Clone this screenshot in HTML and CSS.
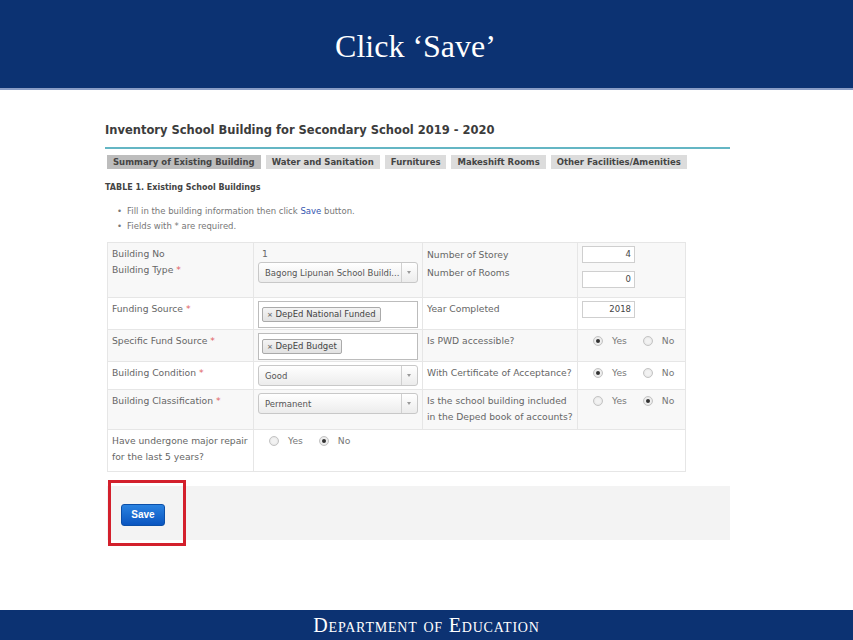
FILE: index.html
```html
<!DOCTYPE html>
<html lang="en">
<head>
    <meta charset="UTF-8">
    <meta name="viewport" content="width=device-width, initial-scale=1.0">
    <title>Click Save</title>
    <link rel="stylesheet" href="styles.css">
</head>
<body>
    <header class="slide-head">
        <h1>Click ‘Save’</h1>
    </header>

    <main class="page">
        <h2 class="page-title">Inventory School Building for Secondary School 2019 - 2020</h2>

        <ul class="tabs">
            <li class="active">Summary of Existing Building</li>
            <li>Water and Sanitation</li>
            <li>Furnitures</li>
            <li>Makeshift Rooms</li>
            <li>Other Facilities/Amenities</li>
        </ul>

        <h4 class="table-caption">TABLE 1. Existing School Buildings</h4>
        <ul class="notes">
            <li>Fill in the building information then click <span class="link">Save</span> button.</li>
            <li>Fields with * are required.</li>
        </ul>

        <table class="form-table">
            <tr class="row-a">
                <td class="label">
                    <div>Building No</div>
                    <div>Building Type <span class="req">*</span></div>
                </td>
                <td>
                    <div class="value">1</div>
                    <div class="select"><span>Bagong Lipunan School Buildi...</span><i class="arrow"></i></div>
                </td>
                <td class="label label-wide">
                    <div>Number of Storey</div>
                    <div>Number of Rooms</div>
                </td>
                <td>
                    <div class="num">4</div>
                    <div class="num">0</div>
                </td>
            </tr>
            <tr class="row-b">
                <td class="label">Funding Source <span class="req">*</span></td>
                <td>
                    <div class="multi"><span class="tag"><b>×</b> DepEd National Funded</span></div>
                </td>
                <td class="label">Year Completed</td>
                <td><div class="num">2018</div></td>
            </tr>
            <tr class="row-b">
                <td class="label">Specific Fund Source <span class="req">*</span></td>
                <td>
                    <div class="multi"><span class="tag"><b>×</b> DepEd Budget</span></div>
                </td>
                <td class="label">Is PWD accessible?</td>
                <td>
                    <div class="radios">
                        <span class="radio checked"></span><span class="opt">Yes</span>
                        <span class="radio"></span><span class="opt">No</span>
                    </div>
                </td>
            </tr>
            <tr class="row-c">
                <td class="label">Building Condition <span class="req">*</span></td>
                <td>
                    <div class="select"><span>Good</span><i class="arrow"></i></div>
                </td>
                <td class="label">With Certificate of Acceptance?</td>
                <td>
                    <div class="radios">
                        <span class="radio checked"></span><span class="opt">Yes</span>
                        <span class="radio"></span><span class="opt">No</span>
                    </div>
                </td>
            </tr>
            <tr class="row-d">
                <td class="label">Building Classification <span class="req">*</span></td>
                <td>
                    <div class="select"><span>Permanent</span><i class="arrow"></i></div>
                </td>
                <td class="label">
                    <div>Is the school building included</div>
                    <div>in the Deped book of accounts?</div>
                </td>
                <td>
                    <div class="radios">
                        <span class="radio"></span><span class="opt">Yes</span>
                        <span class="radio checked"></span><span class="opt">No</span>
                    </div>
                </td>
            </tr>
            <tr class="row-e">
                <td class="label">
                    <div>Have undergone major repair</div>
                    <div>for the last 5 years?</div>
                </td>
                <td colspan="3">
                    <div class="radios">
                        <span class="radio"></span><span class="opt">Yes</span>
                        <span class="radio checked"></span><span class="opt">No</span>
                    </div>
                </td>
            </tr>
        </table>

        <div class="actions">
            <div class="highlight">
                <button class="btn-save">Save</button>
            </div>
        </div>
    </main>

    <footer class="slide-foot">Department of Education</footer>
</body>
</html>
```

FILE: styles.css
```css
body {
    margin: 0;
    min-height: 640px;
    display: flex;
    flex-direction: column;
    font-family: "DejaVu Sans", Verdana, sans-serif;
    background: #fff;
}
.slide-head {
    background-color: #0c3272;
    height: 88px;
    border-bottom: 2px solid #8a9dc6;
    display: flex;
    align-items: center;
    justify-content: center;
}
.slide-head h1 {
    margin: 4px 22px 0 0;
    font-family: "Liberation Serif", "Times New Roman", serif;
    font-weight: normal;
    font-size: 32px;
    color: #fff;
}
.page {
    width: 625px;
    margin-left: 105px;
    padding-top: 32px;
}
.page-title {
    margin: 0;
    font-size: 11.5px;
    line-height: 16px;
    color: #3c3c3c;
    padding-bottom: 9px;
    border-bottom: 2px solid #64b6c4;
}
.tabs {
    list-style: none;
    margin: 6px 0 0 2px;
    padding: 0;
    display: flex;
    gap: 5px;
}
.tabs li {
    background-color: #dcdcdc;
    color: #444;
    font-size: 8.5px;
    font-weight: bold;
    line-height: 14px;
    padding: 0 6px;
}
.tabs li.active {
    background-color: #bdbdbd;
}
.table-caption {
    margin: 13px 0 0;
    font-size: 8px;
    line-height: 12px;
    color: #444;
}
.notes {
    margin: 10px 0 0;
    padding-left: 12px;
    list-style: none;
    font-size: 8.5px;
    line-height: 15px;
    color: #777;
}
.notes li::before {
    content: "•";
    margin-right: 5px;
}
.notes .link {
    color: #3456b0;
}
.form-table {
    margin: 8px 0 0 2px;
    border-collapse: collapse;
    width: 579px;
    table-layout: fixed;
    font-size: 9.2px;
    color: #666;
}
.form-table td {
    box-sizing: border-box;
    border: 1px solid #e6e6e6;
    vertical-align: top;
    padding: 3px 4px 0;
    line-height: 16px;
}
.form-table td:nth-child(1) { width: 146px; }
.form-table td:nth-child(2) { width: 169px; }
.form-table td:nth-child(3) { width: 155px; }
.form-table tr:nth-child(odd) td {
    background-color: #f8f8f8;
}
.row-a { height: 55px; }
.row-b { height: 32px; }
.row-c { height: 28px; }
.row-d { height: 40px; }
.row-e { height: 42px; }
.label-wide {
    line-height: 18px !important;
}
.req {
    color: #e06060;
}
.value {
    padding-left: 4px;
}
.select {
    display: flex;
    align-items: center;
    box-sizing: border-box;
    height: 21px;
    border: 1px solid #c8c8c8;
    border-radius: 3px;
    background: linear-gradient(#ffffff, #ececec);
    color: #555;
    font-size: 8.5px;
}
.select span {
    flex: 1;
    padding-left: 6px;
    white-space: nowrap;
}
.select .arrow {
    width: 15px;
    height: 100%;
    border-left: 1px solid #d0d0d0;
    position: relative;
}
.select .arrow::after {
    content: "";
    position: absolute;
    left: 5px;
    top: 8px;
    border-left: 2px solid transparent;
    border-right: 2px solid transparent;
    border-top: 3px solid #999;
}
.multi {
    box-sizing: border-box;
    height: 27px;
    border: 1px solid #bcbcbc;
    background-color: #fff;
    padding: 4px 3px 0;
}
.tag {
    display: inline-block;
    border: 1px solid #aaa;
    border-radius: 2px;
    background: linear-gradient(#f4f4f4, #e2e2e2);
    color: #444;
    font-size: 8.5px;
    line-height: 12px;
    padding: 0 4px;
}
.tag b {
    font-size: 7px;
    color: #777;
}
.num {
    box-sizing: border-box;
    width: 53px;
    height: 17px;
    border: 1px solid #cfcfcf;
    background-color: #fff;
    text-align: right;
    padding-right: 3px;
    margin-bottom: 8px;
    line-height: 15px;
    font-size: 8.5px;
    color: #444;
}
.radios {
    display: flex;
    align-items: center;
    height: 16px;
    padding-left: 11px;
    color: #777;
}
.radio {
    flex-shrink: 0;
    box-sizing: border-box;
    width: 10px;
    height: 10px;
    border: 1px solid #c4c4c4;
    border-radius: 50%;
    background: radial-gradient(circle, #f2f2f2 40%, #dcdcdc);
    display: flex;
    align-items: center;
    justify-content: center;
}
.radio.checked::after {
    content: "";
    width: 4px;
    height: 4px;
    border-radius: 50%;
    background-color: #333;
}
.opt {
    margin-left: 9px;
}
.opt + .radio {
    margin-left: 16px;
}
.actions {
    margin: 14px 0 0 2px;
    background-color: #f3f3f3;
    height: 54px;
    display: flex;
}
.highlight {
    width: 78px;
    height: 66px;
    margin: -6px 0 0 1px;
    border: 3px solid #d3202c;
    padding: 20px 0 0 10px;
    box-sizing: border-box;
}
.btn-save {
    width: 44px;
    height: 22px;
    border: 1px solid #0b4fa8;
    border-radius: 3px;
    background: linear-gradient(#2a82e0, #0a55c0);
    color: #fff;
    font-family: "Liberation Sans", Arial, sans-serif;
    font-size: 10px;
    font-weight: bold;
    padding: 0;
}
.slide-foot {
    margin-top: auto;
    height: 30px;
    background-color: #0c3272;
    color: #fff;
    font-family: "Liberation Serif", "Times New Roman", serif;
    font-variant: small-caps;
    font-size: 20px;
    letter-spacing: 0.8px;
    text-align: center;
    line-height: 30px;
}
```
